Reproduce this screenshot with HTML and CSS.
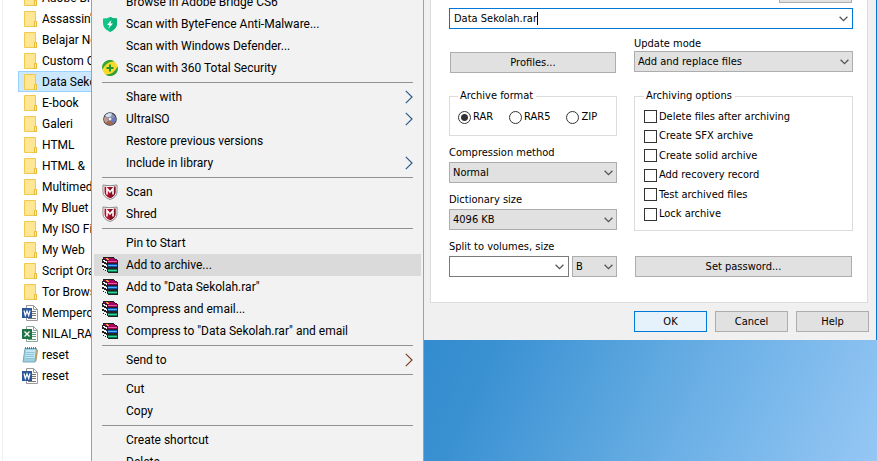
FILE: index.html
```
<!DOCTYPE html>
<html lang="en">
<head>
<meta charset="utf-8">
<title>Add to archive</title>
<link rel="stylesheet" href="styles.css">
</head>
<body>
<svg class="defs" aria-hidden="true">
  <symbol id="folder" viewBox="0 0 16 16">
    <path d="M2.5.5h11v10h1v5h-12z" fill="#ffe694" stroke="#efca4e"/>
    <path d="M12.5 15V10.5h2v5h-2z" fill="#ffeeb0" stroke="#e6bb3c"/>
  </symbol>
  <symbol id="word" viewBox="0 0 16 16">
    <path d="M4.500.5h7l4 4v11h-11z" fill="#fff" stroke="#9a9a9a"/>
    <path d="M11.500.5v4h4" fill="none" stroke="#9a9a9a"/>
    <path d="M10 6.500h4M10 8.500h4M10 10.500h4M6 13.500h8" stroke="#777"/>
    <path d="M0 3h10v10H0z" fill="#2b579a"/>
    <path d="M2 5.500l1.300 5L5 6l1.700 4.500L8 5.500" fill="none" stroke="#fff" stroke-width="1.200"/>
  </symbol>
  <symbol id="excel" viewBox="0 0 16 16">
    <path d="M4.500.5h7l4 4v11h-11z" fill="#fff" stroke="#8fa79a"/>
    <path d="M11.500.5v4h4" fill="none" stroke="#8fa79a"/>
    <path d="M10 6.500h4M10 8.500h4M10 10.500h4M6 13.500h8" stroke="#5fa17d"/>
    <path d="M0 3h10v10H0z" fill="#217346"/>
    <path d="M2.500 5.500l5 5M7.500 5.500l-5 5" stroke="#fff" stroke-width="1.300"/>
  </symbol>
  <symbol id="note" viewBox="0 0 16 16">
    <path d="M3 1.500h11.500L13 15H1z" fill="#9bd0e2" stroke="#7aa9bb"/>
    <path d="M4 3h9.500l-.8 8H3z" fill="#c4e8f3"/>
    <path d="M3.500 5.500h9M3.300 7.500h9M3 9.500h9M2.500 11.500h9" stroke="#8cc4d8"/>
    <path d="M14.500 2L13 15l1.500-1L16 3z" fill="#ba9a64"/>
    <path d="M3 1h12" stroke="#555" stroke-width="1.500" stroke-dasharray="1 1"/>
  </symbol>
  <symbol id="bytefence" viewBox="0 0 16 16">
    <path d="M8 1Q11 2.500 15 2.500V7q0 6-7 9-7-3-7-9V2.500Q5 2.500 8 1z" fill="#0fc588"/>
    <path d="M8 1Q11 2.500 15 2.500V7q0 6-7 9z" fill="#0bb378"/>
    <path d="M9.500 4L5 9h2.500L6.500 12.500 11 7.500H8.500z" fill="#fff"/>
  </symbol>
  <symbol id="total" viewBox="0 0 16 16">
    <circle cx="8" cy="8" r="7.800" fill="#f7da2a"/>
    <path d="M.3 9.500A7.800 7.800 0 0 1 12.500 1.500Q5 .8.3 9.500z" fill="#35a53a"/>
    <path d="M15.700 6.500A7.800 7.800 0 0 1 3.500 14.500Q11 15.200 15.700 6.500z" fill="#2f9e38"/>
    <path d="M8 4.500v7M4.500 8h7" stroke="#259332" stroke-width="2"/>
  </symbol>
  <symbol id="iso" viewBox="0 0 16 16">
    <circle cx="8" cy="8" r="6.200" fill="#8c8fb5" stroke="#3b3f48" stroke-width="1.200"/>
    <path d="M8 8L3 4.500A6 6 0 0 1 10 2.500z" fill="#d5e0ef"/>
    <path d="M8 8l5.500-2A6 6 0 0 1 11.500 12.700z" fill="#6b78bd"/>
    <path d="M8 8l3.500 4.700A6 6 0 0 1 3.500 12z" fill="#a5674a"/>
    <path d="M8 8l-4.500 4A6 6 0 0 1 2.500 6z" fill="#c69a86"/>
    <circle cx="8" cy="8" r="2" fill="#eee" stroke="#767a92"/>
  </symbol>
  <symbol id="shield" viewBox="0 0 16 16">
    <path d="M1 1Q8 2.500 15 1v7q0 5-7 7.500Q1 13 1 8z" fill="#fff" stroke="#888"/>
    <path d="M2.500 2.600Q8 3.600 13.500 2.600V8q0 4-5.500 6.200Q2.500 12 2.500 8z" fill="#b0122e"/>
    <path d="M8 3.200q3 0 5.500-.6V8q0 4-5.500 6.200z" fill="#831126"/>
    <path d="M5 10.500v-6l3 3.500 3-3.500v6" fill="none" stroke="#fff" stroke-width="1.600"/>
  </symbol>
  <symbol id="rar" viewBox="0 0 16 16">
    <g shape-rendering="crispEdges">
      <path d="M1 0h11v1h1v1h2v1h1v13H6v-1H5v-1H3v-1H1v-1H0V2h1z" fill="#222"/>
      <path d="M2 1h10v1h1v1h2v1H6V3H4V2H2z" fill="#a8005c"/>
      <path d="M4 1h2v1h1v1H5V2H4z" fill="#e8c21c"/>
      <path d="M6 4h9v1H6z" fill="#e65aa8"/>
      <path d="M6 5h9v1H6z" fill="#93004f"/>
      <path d="M6 7h9v1H6z" fill="#0a52b5"/>
      <path d="M6 8h9v1H6z" fill="#52b1f2"/>
      <path d="M6 9h9v1H6z" fill="#0a52b5"/>
      <path d="M6 12h9v1H6z" fill="#087a4e"/>
      <path d="M6 13h9v1H6z" fill="#35d29b"/>
      <path d="M6 14h9v1H6z" fill="#087a4e"/>
      <path d="M1 3h2v1h2v2H4V5H2V4H1zM0 6h2v1h2v1h1v2H4V9H2V8H0zM0 10h2v1h2v1h1v2H4v-1H2v-1H0z" fill="#f4f4f4"/>
    </g>
  </symbol>
  <symbol id="more" viewBox="0 0 8 14"><path d="M.8.8L7 7 .8 13.200" fill="none" stroke="currentColor" stroke-width="1.200"/></symbol>
  <symbol id="down" viewBox="0 0 9 6"><path d="M.6.8l3.900 3.900L8.400.8" fill="none" stroke="#555" stroke-width="1.300"/></symbol>
</svg>

<main class="desktop">
  <section class="explorer" aria-label="Files">
    <ul class="files">
      <li><svg><use href="#folder"/></svg>Adobe Bri</li>
      <li><svg><use href="#folder"/></svg>Assassin's</li>
      <li><svg><use href="#folder"/></svg>Belajar Ng</li>
      <li><svg><use href="#folder"/></svg>Custom O</li>
      <li class="selected"><svg><use href="#folder"/></svg>Data Seko</li>
      <li><svg><use href="#folder"/></svg>E-book</li>
      <li><svg><use href="#folder"/></svg>Galeri</li>
      <li><svg><use href="#folder"/></svg>HTML</li>
      <li><svg><use href="#folder"/></svg>HTML &amp;</li>
      <li><svg><use href="#folder"/></svg>Multimed</li>
      <li><svg><use href="#folder"/></svg>My Bluet</li>
      <li><svg><use href="#folder"/></svg>My ISO Fi</li>
      <li><svg><use href="#folder"/></svg>My Web</li>
      <li><svg><use href="#folder"/></svg>Script Ora</li>
      <li><svg><use href="#folder"/></svg>Tor Brows</li>
      <li><svg><use href="#word"/></svg>Memperc</li>
      <li><svg><use href="#excel"/></svg>NILAI_RA</li>
      <li><svg><use href="#note"/></svg>reset</li>
      <li><svg><use href="#word"/></svg>reset</li>
    </ul>
  </section>

  <div class="menu" role="menu">
    <button role="menuitem"><i></i>Browse in Adobe Bridge CS6</button>
    <button role="menuitem"><svg class="icon"><use href="#bytefence"/></svg>Scan with ByteFence Anti-Malware...</button>
    <button role="menuitem"><i></i>Scan with Windows Defender...</button>
    <button role="menuitem"><svg class="icon"><use href="#total"/></svg>Scan with 360 Total Security</button>
    <hr>
    <button role="menuitem"><i></i>Share with<svg class="more"><use href="#more"/></svg></button>
    <button role="menuitem"><svg class="icon"><use href="#iso"/></svg>UltraISO<svg class="more"><use href="#more"/></svg></button>
    <button role="menuitem"><i></i>Restore previous versions</button>
    <button role="menuitem"><i></i>Include in library<svg class="more"><use href="#more"/></svg></button>
    <hr>
    <button role="menuitem"><svg class="icon"><use href="#shield"/></svg>Scan</button>
    <button role="menuitem"><svg class="icon"><use href="#shield"/></svg>Shred</button>
    <hr>
    <button role="menuitem"><i></i>Pin to Start</button>
    <button role="menuitem" class="current"><svg class="icon"><use href="#rar"/></svg>Add to archive...</button>
    <button role="menuitem"><svg class="icon"><use href="#rar"/></svg>Add to "Data Sekolah.rar"</button>
    <button role="menuitem"><svg class="icon"><use href="#rar"/></svg>Compress and email...</button>
    <button role="menuitem"><svg class="icon"><use href="#rar"/></svg>Compress to "Data Sekolah.rar" and email</button>
    <hr>
    <button role="menuitem"><i></i>Send to<svg class="more warm"><use href="#more"/></svg></button>
    <hr>
    <button role="menuitem"><i></i>Cut</button>
    <button role="menuitem"><i></i>Copy</button>
    <hr>
    <button role="menuitem"><i></i>Create shortcut</button>
    <button role="menuitem"><i></i>Delete</button>
  </div>

  <div class="workspace">
    <form class="dialog">
      <div class="panel">
        <div class="name-row">
          <label for="name">Archive name</label>
          <button type="button" class="button">Browse...</button>
        </div>
        <div class="combo focused">
          <input id="name" type="text" value="Data Sekolah.rar"><span class="caret"></span>
          <svg class="down"><use href="#down"/></svg>
        </div>

        <div class="columns">
          <div class="column">
            <button type="button" class="button profiles">Profiles...</button>
            <fieldset class="formats">
              <legend>Archive format</legend>
              <label><input type="radio" name="format" checked>RAR</label>
              <label><input type="radio" name="format">RAR5</label>
              <label><input type="radio" name="format">ZIP</label>
            </fieldset>
            <div class="field">
              <label for="method">Compression method</label>
              <div class="pick"><select id="method"><option>Normal</option></select><svg class="down"><use href="#down"/></svg></div>
            </div>
            <div class="field">
              <label for="dictionary">Dictionary size</label>
              <div class="pick"><select id="dictionary"><option>4096 KB</option></select><svg class="down"><use href="#down"/></svg></div>
            </div>
            <div class="field">
              <label for="split">Split to volumes, size</label>
              <div class="split">
                <div class="combo"><input id="split" type="text"><svg class="down"><use href="#down"/></svg></div>
                <div class="pick"><select aria-label="Unit"><option>B</option></select><svg class="down"><use href="#down"/></svg></div>
              </div>
            </div>
          </div>

          <div class="column">
            <div class="field update">
              <label for="mode">Update mode</label>
              <div class="pick"><select id="mode"><option>Add and replace files</option></select><svg class="down"><use href="#down"/></svg></div>
            </div>
            <fieldset class="options">
              <legend>Archiving options</legend>
              <div class="checks">
                <label><input type="checkbox">Delete files after archiving</label>
                <label><input type="checkbox">Create SFX archive</label>
                <label><input type="checkbox">Create solid archive</label>
                <label><input type="checkbox">Add recovery record</label>
                <label><input type="checkbox">Test archived files</label>
                <label><input type="checkbox">Lock archive</label>
              </div>
            </fieldset>
            <button type="button" class="button password">Set password...</button>
          </div>
        </div>
      </div>
      <div class="actions">
        <button type="button" class="button primary">OK</button>
        <button type="button" class="button">Cancel</button>
        <button type="button" class="button">Help</button>
      </div>
    </form>
  </div>
</main>
</body>
</html>
```
FILE: styles.css
```
* {
  box-sizing: border-box;
}

body {
  margin: 0;
  background: #fff;
  color: #000;
  font-family: Roboto, "Open Sans", sans-serif;
  font-size: 12px;
}

.defs {
  display: none;
}

button,
input,
select {
  margin: 0;
  color: inherit;
  font: inherit;
}

.desktop {
  display: grid;
  grid-template-columns: 91px 333px minmax(0, 1fr);
  height: 100vh;
  overflow: hidden;
}

/* File list */

.explorer {
  min-width: 0;
  margin-left: 2px;
  overflow: hidden;
  border-left: 1px solid #f0f0f0;
}

.files {
  margin: -13px 0 0 15px;
  padding: 0;
  list-style: none;
}

.files li {
  display: flex;
  align-items: center;
  gap: 4px;
  height: 21px;
  padding-left: 3px;
  border: 1px solid transparent;
  white-space: nowrap;
}

.files svg {
  flex: none;
  width: 16px;
  height: 16px;
}

.files .selected {
  border-color: #99d1ff;
  border-right: 0;
  background: #cce8ff;
}

/* Context menu */

.menu {
  display: flex;
  flex-direction: column;
  min-height: 0;
  overflow: hidden;
  padding: 0 2px;
  border: solid #a0a0a0;
  border-width: 0 1px;
  background: #f2f2f2;
}

.menu button:first-child {
  margin-top: -9px;
}

.menu button {
  display: flex;
  flex: none;
  align-items: center;
  gap: 8px;
  height: 22px;
  padding: 0 8px;
  border: 0;
  background: none;
  text-align: left;
  white-space: nowrap;
}

.menu .current {
  background: #dadada;
}

.menu i,
.icon {
  flex: none;
  width: 16px;
  height: 16px;
}

.menu hr {
  flex: none;
  width: auto;
  height: 1px;
  margin: 3px 8px;
  border: 0;
  background: #919191;
}

.more {
  width: 8px;
  height: 14px;
  margin-left: auto;
  color: #2d5d8c;
}

.warm {
  color: #7b4020;
}

/* Archive dialog */

.workspace {
  min-width: 0;
  background: linear-gradient(115deg, #2a86cb 10%, #3a91d2 35%, #6aafe5 68%, #95c7f5 100%);
}

.dialog {
  margin-top: -18px;
  border-right: 1px solid #0078d7;
  background: #f0f0f0;
  font-family: "DejaVu Sans Condensed", "DejaVu Sans", sans-serif;
  font-size: 11px;
  line-height: 14px;
}

.panel {
  margin: 0 8px 0 6px;
  padding: 0 14px 25px 18px;
  border: 1px solid #dcdcdc;
  border-top: 0;
  background: #fff;
}

.name-row {
  display: flex;
  align-items: center;
  justify-content: space-between;
  padding-right: 1px;
  margin-bottom: 5px;
}

.button {
  height: 21px;
  min-width: 73px;
  padding: 0 8px;
  border: 1px solid #adadad;
  background: #e1e1e1;
}

.primary {
  border-color: #0078d7;
  background: #e5f1fb;
}

.combo {
  display: flex;
  align-items: center;
  height: 21px;
  padding: 0 4px;
  border: 1px solid #7a7a7a;
  background: #fff;
}

.focused {
  border-color: #0078d7;
}

.combo input {
  min-width: 0;
  flex: 1;
  padding: 0;
  border: 0;
  outline: 0;
  background: none;
}

.focused input {
  flex: none;
  field-sizing: content;
}

.caret {
  width: 1px;
  height: 13px;
  background: #000;
}

.down {
  flex: none;
  width: 9px;
  height: 6px;
  margin-left: auto;
}

.columns {
  display: grid;
  grid-template-columns: 168px minmax(0, 1fr);
  gap: 17px;
}

.column {
  display: flex;
  flex-direction: column;
}

.profiles {
  margin: 23px 1px 16px;
}

fieldset {
  min-width: 0;
  margin: 0;
  border: 1px solid #dcdcdc;
}

legend {
  padding: 0 3px 0 2px;
}

.formats {
  display: flex;
  gap: 16px;
  height: 47px;
  padding: 6px 8px;
}

.formats label,
.checks label {
  display: flex;
  align-items: center;
  gap: 2px;
  white-space: nowrap;
}

.formats label {
  height: 16px;
}

input[type="radio"],
input[type="checkbox"] {
  flex: none;
  width: 13px;
  height: 13px;
  border: 1px solid #333;
  background: #fff;
  appearance: none;
}

input[type="radio"] {
  border-radius: 50%;
}

input[type="radio"]:checked {
  background: radial-gradient(circle, #333 3px, #fff 4px);
}

.field {
  display: grid;
  gap: 2px;
  margin-top: 10px;
}

.update {
  gap: 0;
  margin: 8px 0 17px;
}

.pick {
  display: grid;
  align-items: center;
}

.pick > * {
  grid-area: 1 / 1;
}

.pick .down {
  margin-right: 4px;
  pointer-events: none;
}

select {
  width: 100%;
  height: 21px;
  padding: 0 3px;
  border: 1px solid #adadad;
  border-radius: 0;
  background: #e1e1e1;
  appearance: none;
}

.split {
  display: grid;
  grid-template-columns: minmax(0, 1fr) 45px;
  gap: 3px;
}

.options {
  height: 142px;
  padding: 4px 9px;
}

.checks {
  display: grid;
  grid-auto-rows: 1fr;
  height: 117px;
}

.password {
  margin: auto 1px 0;
}

.actions {
  display: flex;
  justify-content: flex-end;
  gap: 8px;
  padding: 8px 7px;
}
```
